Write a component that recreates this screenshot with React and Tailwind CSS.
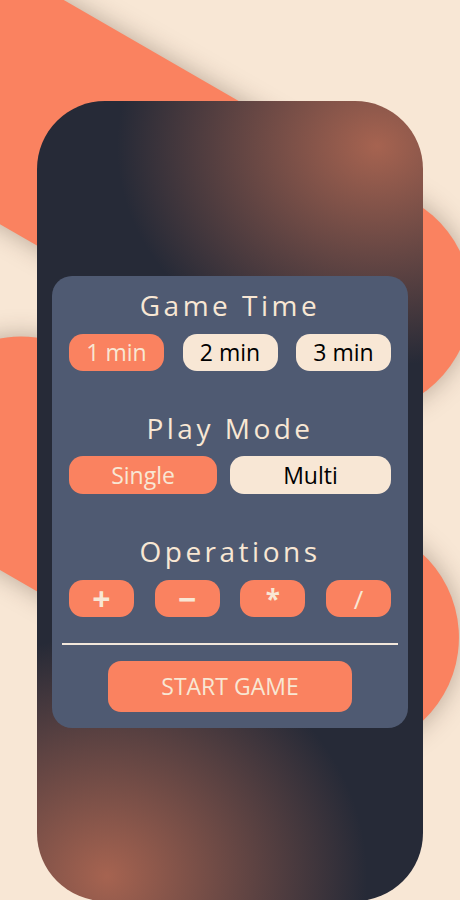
import React, { useState } from 'react';

const times = ['1 min', '2 min', '3 min'];
const modes = [
  { id: 'single', label: 'Single', w: 'w-[148px]' },
  { id: 'multi', label: 'Multi', w: 'w-[161px]' },
];
const ops = ['+', '−', '*', '/'];

const SectionTitle = ({ children, className = '' }) => (
  <h2
    className={`text-center text-[28px] font-medium leading-[32px] tracking-[3.5px] text-[#f8e7d4] ${className}`}
  >
    {children}
  </h2>
);

export default function App() {
  const [time, setTime] = useState('1 min');
  const [mode, setMode] = useState('single');

  return (
    <div className="relative w-full h-[900px] overflow-hidden bg-[#f8e7d5] font-['Open_Sans','Noto_Sans',sans-serif]">
      {/* background pills */}
      <div className="absolute left-[153px] top-[182px] w-[700px] h-[226px] -translate-x-1/2 -translate-y-1/2 rotate-[30deg] rounded-full bg-[#fa8260] shadow-[0_0_26px_rgba(60,40,30,0.35)]" />
      <div className="absolute left-[183px] top-[544px] w-[602px] h-[228px] -translate-x-1/2 -translate-y-1/2 rotate-[30deg] rounded-full bg-[#fa8260] shadow-[0_0_26px_rgba(60,40,30,0.35)]" />

      {/* phone card */}
      <div className="relative mx-auto mt-[101px] w-[386px] h-[800px] rounded-[68px] bg-[#262a37] bg-[image:radial-gradient(ellipse_260px_220px_at_340px_45px,rgba(166,99,80,1),rgba(166,99,80,0)_100%),radial-gradient(ellipse_260px_240px_at_70px_775px,rgba(166,99,80,1),rgba(166,99,80,0)_100%)] pt-[175px] px-[15px]">
        <div className="rounded-[20px] bg-[#4f5a72] pt-[13px] pb-[16px] px-[17px]">
          <SectionTitle>Game Time</SectionTitle>
          <div className="mt-[13px] flex justify-between">
            {times.map((t) => (
              <button
                key={t}
                onClick={() => setTime(t)}
                className={`w-[95px] h-[37px] rounded-[14px] text-[23px] font-medium leading-none ${
                  time === t ? 'bg-[#fa8260] text-[#f8e7d4]' : 'bg-[#f8e7d5] text-black'
                }`}
              >
                {t}
              </button>
            ))}
          </div>

          <SectionTitle className="mt-[41px]">Play Mode</SectionTitle>
          <div className="mt-[12px] flex justify-between">
            {modes.map((m) => (
              <button
                key={m.id}
                onClick={() => setMode(m.id)}
                className={`${m.w} h-[38px] rounded-[14px] text-[23px] font-medium leading-none ${
                  mode === m.id ? 'bg-[#fa8260] text-[#f8e7d4]' : 'bg-[#f8e7d5] text-black'
                }`}
              >
                {m.label}
              </button>
            ))}
          </div>

          <SectionTitle className="mt-[41px]">Operations</SectionTitle>
          <div className="mt-[13px] flex justify-between">
            {ops.map((o) => (
              <button
                key={o}
                className={`w-[65px] h-[37px] rounded-[14px] bg-[#fa8260] leading-none text-[#f8e7d4] ${
                  o === '/' ? 'text-[26px]' : o === '*' ? 'text-[26px] font-bold' : 'text-[32px] font-bold'
                }`}
              >
                {o}
              </button>
            ))}
          </div>

          <div className="mt-[26px] -mx-[7px] h-[2px] bg-[#f3e8dc]" />

          <button className="mx-auto mt-[16px] block w-[244px] h-[51px] rounded-[13px] bg-[#fa8260] text-[23px] font-medium text-[#f8e7d4]">
            START GAME
          </button>
        </div>
      </div>
    </div>
  );
}
